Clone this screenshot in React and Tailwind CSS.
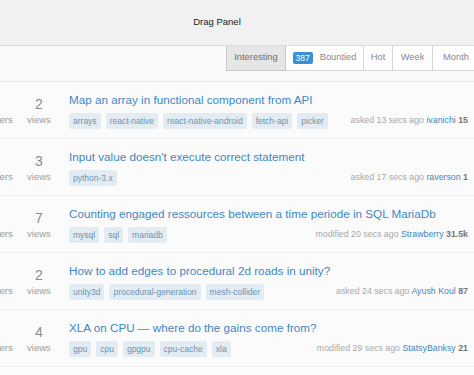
import React from "react";

const questions = [
  { views: 2, title: "Map an array in functional component from API", tags: ["arrays", "react-native", "react-native-android", "fetch-api", "picker"], action: "asked 13 secs ago", user: "ivanichi", rep: "15" },
  { views: 3, title: "Input value doesn't execute correct statement", tags: ["python-3.x"], action: "asked 17 secs ago", user: "raverson", rep: "1" },
  { views: 7, title: "Counting engaged ressources between a time periode in SQL MariaDb", tags: ["mysql", "sql", "mariadb"], action: "modified 20 secs ago", user: "Strawberry", rep: "31.5k" },
  { views: 2, title: "How to add edges to procedural 2d roads in unity?", tags: ["unity3d", "procedural-generation", "mesh-collider"], action: "asked 24 secs ago", user: "Ayush Koul", rep: "87" },
  { views: 4, title: "XLA on CPU \u2014 where do the gains come from?", tags: ["gpu", "cpu", "gpgpu", "cpu-cache", "xla"], action: "modified 29 secs ago", user: "StatsyBanksy", rep: "21" },
];

export default function App() {
  return (
    <div className="w-[474px] h-[375px] overflow-hidden bg-[#fbfbfb] font-['Liberation_Sans',Arial,sans-serif]">
      <div className="h-[46px] bg-[#f1f1f1] border-b border-[#dcdcdc] flex items-center justify-center pr-[40px] text-[9.5px] text-[#222]">
        Drag Panel
      </div>
      <div className="h-[36px] border-b border-[#ececec] flex items-start pl-[226px] bg-[#fafafa]">
        <div className="flex h-[25px] text-[9.3px] text-[#888] shrink-0">
          <div className="w-[60px] flex items-center justify-center bg-[#e6e6e6] border border-t-0 border-[#c8c8c8] text-[#6f6f6f]">Interesting</div>
          <div className="w-[78px] flex items-center justify-center gap-[7px] bg-white border-b border-r border-[#d6d6d6]">
            <span className="bg-[#3a8fd5] text-white text-[8.5px] px-[3px] leading-[12px] rounded-[2px]">387</span>
            Bountied
          </div>
          <div className="w-[29px] flex items-center justify-center bg-white border-b border-r border-[#d6d6d6]">Hot</div>
          <div className="w-[40px] flex items-center justify-center bg-white border-b border-r border-[#d6d6d6]">Week</div>
          <div className="w-[46px] flex items-center justify-center bg-white border-b border-[#d6d6d6]">Month</div>
        </div>
      </div>
      {questions.map((q, i) => (
        <div key={i} className="h-[57px] border-b border-[#eeeeee] flex ml-[-71px] pr-[6px] pt-[10px]">
          <div className="w-[44px] shrink-0 flex flex-col items-center text-[#999]">
            <span className="text-[14px] leading-[16px]">0</span>
            <span className="text-[9.5px] leading-[18px]">votes</span>
          </div>
          <div className="w-[44px] shrink-0 flex flex-col items-center text-[#999] pt-[4px]">
            <span className="text-[14px] leading-[16px]">0</span>
            <span className="text-[9.5px] leading-[16px]">answers</span>
          </div>
          <div className="w-[44px] shrink-0 flex flex-col items-center text-[#a0a0a0] pt-[4px]">
            <span className="text-[14px] leading-[16px] text-[#8a8a8a]">{q.views}</span>
            <span className="text-[9.5px] leading-[16px]">views</span>
          </div>
          <div className="flex-1 min-w-0 ml-[8px] flex flex-col">
            <div className="text-[11.7px] leading-[16px] text-[#3f87c2] whitespace-nowrap">{q.title}</div>
            <div className="flex items-center mt-[5px]">
              <div className="flex gap-[5px]">
                {q.tags.map((t) => (
                  <span key={t} className="bg-[#e3ecf3] text-[#6a93b5] text-[8.5px] leading-[16px] px-[4px] rounded-[2px] whitespace-nowrap">{t}</span>
                ))}
              </div>
              <div className="ml-auto text-[8.8px] whitespace-nowrap text-[#a8a8a8]">
                {q.action} <span className="text-[#3f87c2]">{q.user}</span> <span className="font-bold text-[#777]">{q.rep}</span>
              </div>
            </div>
          </div>
        </div>
      ))}
    </div>
  );
}
